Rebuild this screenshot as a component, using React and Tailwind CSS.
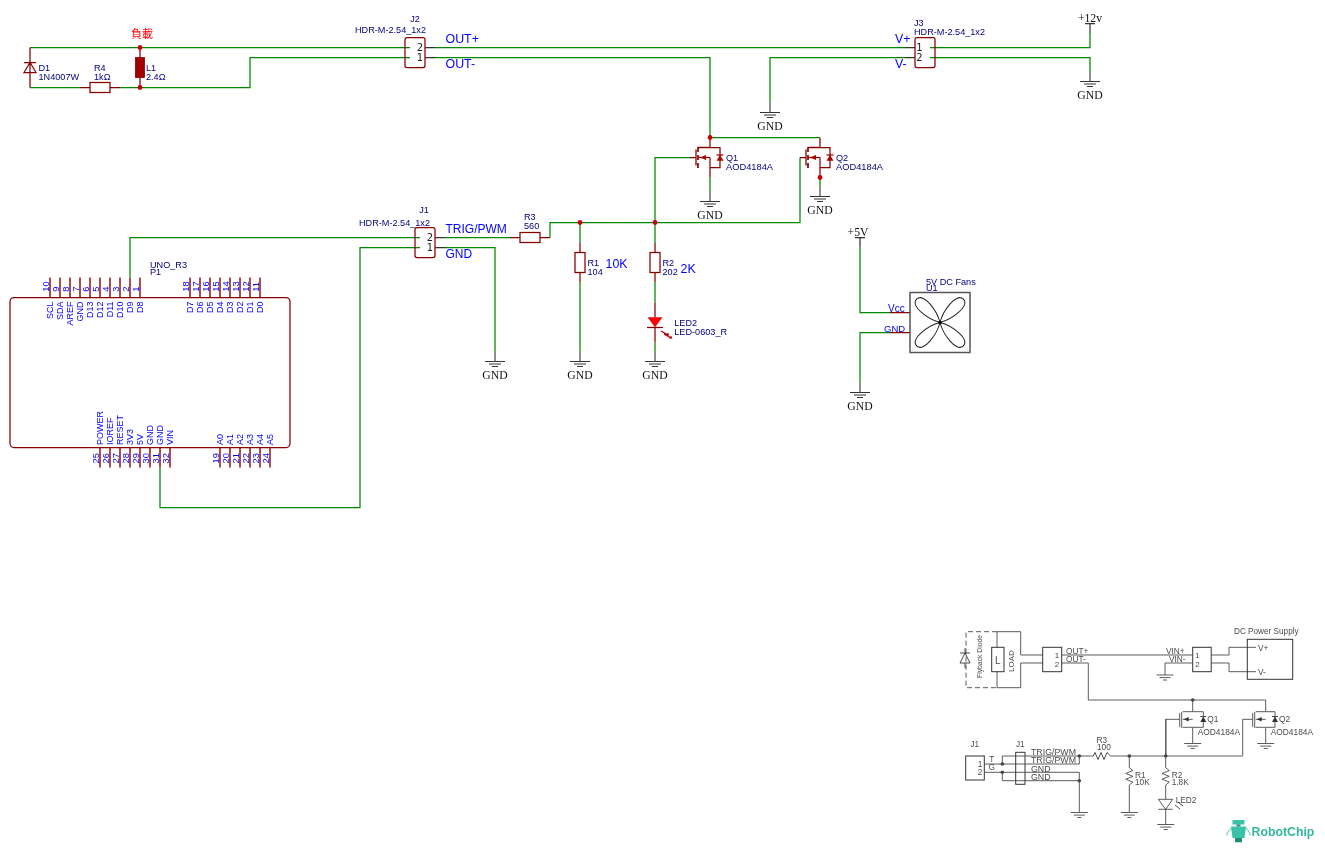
import React from "react";

const GREEN = "#008800";
const RED = "#880000";
const PIN = "#333333";
const NAVY = "#000080";
const BLUE = "#0000ff";
const GREY = "#4a4a4a";

function T({ x, y, c = NAVY, s = 9.15, a = "start", rot, cls = "", children }) {
  return (
    <text
      x={x}
      y={y}
      fill={c}
      fontSize={s}
      textAnchor={a}
      className={cls}
      transform={rot ? `rotate(-90 ${x} ${y})` : undefined}
    >
      {children}
    </text>
  );
}

const P = ({ d, c = RED, w = 1.25, f = "none", dash }) => (
  <path d={d} stroke={c} strokeWidth={w} fill={f} strokeDasharray={dash} />
);

const Dot = ({ x, y, c = "#cc0000", r = 2.4 }) => <circle cx={x} cy={y} r={r} fill={c} />;

function Gnd({ x, y }) {
  return (
    <g>
      <P d={`M${x} ${y - 10}V${y}M${x - 10} ${y}H${x + 10}M${x - 6} ${y + 2.5}H${x + 6}M${x - 3} ${y + 5}H${x + 3}`} c={PIN} w={1.1} />
      <T x={x} y={y + 17} c="#111111" s={11.7} a="middle" cls="font-['Liberation_Serif',serif]">GND</T>
    </g>
  );
}

function Hdr({ x, y, w = 20, nums, nx }) {
  return (
    <g>
      <rect x={x} y={y} width={w} height={30} rx={2} stroke={RED} fill="none" />
      <T x={nx} y={y + 13.5} c="#222222" s={10} a="middle" cls="font-['DejaVu_Sans',sans-serif]">{nums[0]}</T>
      <T x={nx} y={y + 23.5} c="#222222" s={10} a="middle" cls="font-['DejaVu_Sans',sans-serif]">{nums[1]}</T>
    </g>
  );
}

function Fet({ x, name }) {
  const y = 157.5;
  return (
    <g>
      <P d={`M${x} 138V${y - 10}H${x + 10}V${y + 10}H${x}M${x} ${y + 10}V177M${x} ${y}V${y + 10}M${x - 20} ${y}H${x - 14}`} />
      <P d={`M${x - 14} ${y - 8}V${y + 8}`} w={1.3} />
      <P d={`M${x - 12} ${y - 10.5}V${y - 5.5}M${x - 12} ${y - 2.5}V${y + 2.5}M${x - 12} ${y + 5.5}V${y + 10.5}M${x - 12} ${y - 10}H${x}`} w={1.7} />
      <P d={`M${x - 11} ${y}H${x}`} />
      <path d={`M${x - 10} ${y}L${x - 4} ${y - 2.6}V${y + 2.6}Z`} fill="#aa0000" />
      <path d={`M${x + 10} ${y - 2.5}L${x + 13.5} ${y + 3.2}H${x + 6.5}Z`} fill="#aa0000" />
      <P d={`M${x + 6.5} ${y - 2.5}H${x + 13.5}`} c="#aa0000" />
      <T x={x + 16} y={y + 3.6}>{name}</T>
      <T x={x + 16} y={y + 12.3} s={9.3}>AOD4184A</T>
    </g>
  );
}

const topA = [["10", "SCL"], ["9", "SDA"], ["8", "AREF"], ["7", "GND"], ["6", "D13"], ["5", "D12"], ["4", "D11"], ["3", "D10"], ["2", "D9"], ["1", "D8"]];
const topB = [["18", "D7"], ["17", "D6"], ["16", "D5"], ["15", "D4"], ["14", "D3"], ["13", "D2"], ["12", "D1"], ["11", "D0"]];
const botA = [["25", "POWER"], ["26", "IOREF"], ["27", "RESET"], ["28", "3V3"], ["29", "5V"], ["30", "GND"], ["31", "GND"], ["32", "VIN"]];
const botB = [["19", "A0"], ["20", "A1"], ["21", "A2"], ["22", "A3"], ["23", "A4"], ["24", "A5"]];

function TopPins({ list, x0 }) {
  return list.map(([n, l], i) => {
    const x = x0 + i * 10;
    return (
      <g key={n}>
        <P d={`M${x} 277.5V297.5`} w={1.4} />
        <T x={x - 0.9} y={291.8} c={BLUE} s={9.4} rot>{n}</T>
        <T x={x + 2.8} y={301.5} c={BLUE} s={9} a="end" rot>{l}</T>
      </g>
    );
  });
}

function BotPins({ list, x0 }) {
  return list.map(([n, l], i) => {
    const x = x0 + i * 10;
    return (
      <g key={n}>
        <P d={`M${x} 447.5V467.5`} w={1.4} />
        <T x={x - 1.2} y={463.5} c={BLUE} s={9.4} rot>{n}</T>
        <T x={x + 3.3} y={445} c={BLUE} s={9} rot>{l}</T>
      </g>
    );
  });
}

function SmallGnd({ x, y }) {
  return <P d={`M${x - 8.5} ${y}H${x + 8.5}M${x - 5.5} ${y + 2.6}H${x + 5.5}M${x - 2} ${y + 5}H${x + 2}`} c={GREY} w={0.9} />;
}

function Zig({ x, y }) {
  const pts = [];
  const n = 6;
  for (let i = 0; i <= n; i++) {
    const yy = y + (i * 17.3) / n;
    pts.push(`${i === 0 || i === n ? x : x + (i % 2 ? 3.6 : -3.6)} ${yy}`);
  }
  return <P d={`M${pts.join("L")}`} c={GREY} w={0.9} />;
}

function SFet({ x, gx, rx, label, tx }) {
  return (
    <g>
      <P d={`M${x} 700V711.7H${rx}V727.3H${x}M${x} 711.7H${x - 10}M${x} 727.3H${x - 10}M${x} 727.3V743`} c={GREY} w={0.9} />
      <P d={`M${x - 11} 712V728M${x - 13} 713V727M${x - 13} 719.3H${gx}M${gx} 719.3V755.7M${x - 10} 719.3H${x}`} c={GREY} w={0.9} />
      <path d={`M${x - 9} 719.3L${x - 4} 717V721.6Z`} fill="#333" />
      <path d={`M${rx} 716.5L${rx + 3} 722H${rx - 3}Z`} fill="#333" />
      <P d={`M${rx - 3} 716.5H${rx + 3}`} c="#333" w={0.9} />
      <SmallGnd x={x} y={743.5} />
      <T x={rx + 4} y={722} c={GREY} s={8.4}>{label}</T>
      <T x={tx} y={735.3} c={GREY} s={8.4}>AOD4184A</T>
    </g>
  );
}

export default function App() {
  return (
    <div className="w-[1325px] h-[853px] bg-white overflow-hidden">
      <svg width="1325" height="853" viewBox="0 0 1325 853" className="block font-['Liberation_Sans',sans-serif]">
        <g className="blur-[0.25px]" strokeWidth={1.25}>
          {/* wires */}
          <P
            c={GREEN}
            d="M30 47.5H410M435 47.5H905M930 47.5H1090V33M30 87.5H80M120 87.5H250V57.5H410M435 57.5H710V137.5H820M770 102.5V57.5H905M930 57.5H1090V71.5M690 157.5H655V243M550 237.5V222.5H800V157.5M445 237.5H510M445 247.5H495V351.5M420 237.5H130V277.5M420 247.5H360V507.5H160V467.5M580 222.5V243M580 282V351.5M655 282V302.5M655 342.5V351.5M710 177V191.5M820 177V186.5M860 247V312.5H890M890 332.5H860V382.5"
          />

          {/* D1, R4, L1 */}
          <P d="M30 47.5V87.5M24 62.5H36M30 62.5L24 72.5H36Z" />
          <P d="M80 87.5H90M110 87.5H120M140 47.5V57.5M140 77.5V87.5" />
          <rect x={90} y={82.5} width={20} height={10} stroke={RED} fill="none" />
          <rect x={135.5} y={57.5} width={9} height={20} fill="#a00000" stroke={RED} strokeWidth={0.8} />
          <Dot x={140} y={47.5} />
          <Dot x={140} y={87.5} />
          <T x={131} y={37.5} c="#ff0000" s={11} cls="font-['Noto_Sans_CJK_TC',sans-serif]">負載</T>
          <T x={38.5} y={71}>D1</T>
          <T x={38.5} y={79.8}>1N4007W</T>
          <T x={94} y={70.8}>R4</T>
          <T x={94} y={79.5}>1kΩ</T>
          <T x={146} y={71}>L1</T>
          <T x={146} y={79.8}>2.4Ω</T>

          {/* J2 */}
          <Hdr x={405} y={37.5} nums={["2", "1"]} nx={420} />
          <P c={PIN} d="M425 47.5H435M425 57.5H435" />
          <T x={415} y={22} a="middle">J2</T>
          <T x={355} y={32.8}>HDR-M-2.54_1x2</T>
          <T x={445.5} y={42.8} c={BLUE} s={12.4}>OUT+</T>
          <T x={445.5} y={67.5} c={BLUE} s={12.4}>OUT-</T>

          {/* J3 */}
          <Hdr x={915} y={37.5} nums={["1", "2"]} nx={919.5} />
          <P c={PIN} d="M905 47.5H915M905 57.5H915" />
          <T x={914} y={25.8}>J3</T>
          <T x={914} y={35}>HDR-M-2.54_1x2</T>
          <T x={895} y={42.8} c={BLUE} s={12.4}>V+</T>
          <T x={895} y={67.5} c={BLUE} s={12.4}>V-</T>

          {/* +12v */}
          <P c={PIN} d="M1085 23.5H1095M1090 23.5V33" />
          <T x={1090} y={21.5} c="#111111" s={11.7} a="middle" cls="font-['Liberation_Serif',serif]">+12v</T>

          <Gnd x={770} y={112.5} />
          <Gnd x={1090} y={81.5} />
          <Gnd x={710} y={201.5} />
          <Gnd x={820} y={196.5} />
          <Gnd x={495} y={361.5} />
          <Gnd x={580} y={361.5} />
          <Gnd x={655} y={361.5} />
          <Gnd x={860} y={392.5} />

          {/* MOSFETs */}
          <Fet x={710} name="Q1" />
          <Fet x={820} name="Q2" />
          <Dot x={710} y={137.5} />
          <Dot x={820} y={177.5} />
          <Dot x={655} y={222.5} />
          <Dot x={580} y={222.5} />

          {/* J1 */}
          <Hdr x={415} y={227.5} nums={["2", "1"]} nx={430} />
          <P c={PIN} d="M435 237.5H445M435 247.5H445" />
          <T x={424} y={212.5} a="middle">J1</T>
          <T x={359} y={225.8}>HDR-M-2.54_1x2</T>
          <T x={445.5} y={232.8} c={BLUE} s={12}>TRIG/PWM</T>
          <T x={445.5} y={257.5} c={BLUE} s={12}>GND</T>

          {/* R3 R1 R2 LED */}
          <P d="M510 237.5H520M540 237.5H550M580 243V252.5M580 272.5V282M655 243V252.5M655 272.5V282M655 302.5V317M655 327V342.5" />
          <rect x={520} y={232.5} width={20} height={10} stroke={RED} fill="none" />
          <rect x={575} y={252.5} width={10} height={20} stroke={RED} fill="none" />
          <rect x={650} y={252.5} width={10} height={20} stroke={RED} fill="none" />
          <path d="M648 317.5H662L655 327Z" fill="#ff0000" stroke="#cc0000" strokeWidth={0.5} />
          <P d="M647 327.5H663" />
          <P d="M661 331L668 335M664 334L671 338" c="#aa0000" />
          <path d="M669.5 335.5L666 335.5L668 332.5ZM672.5 338.5L669 338.5L671 335.5Z" fill="#aa0000" />
          <T x={524} y={220}>R3</T>
          <T x={524} y={229.3}>560</T>
          <T x={587.5} y={265.8}>R1</T>
          <T x={587.5} y={275}>104</T>
          <T x={605.5} y={267.8} c={BLUE} s={12.4}>10K</T>
          <T x={662.5} y={265.8}>R2</T>
          <T x={662.5} y={275}>202</T>
          <T x={680.5} y={272.8} c={BLUE} s={12.4}>2K</T>
          <T x={674.3} y={325.8}>LED2</T>
          <T x={674.3} y={335}>LED-0603_R</T>

          {/* Arduino */}
          <rect x={10} y={297.5} width={280} height={150} rx={4} stroke={RED} fill="none" />
          <T x={150} y={267.5}>UNO_R3</T>
          <T x={150} y={274.5}>P1</T>
          <TopPins list={topA} x0={50} />
          <TopPins list={topB} x0={190} />
          <BotPins list={botA} x0={100} />
          <BotPins list={botB} x0={220} />

          {/* Fan */}
          <P c={PIN} d="M855 237.5H865M860 237.5V247" />
          <T x={858} y={236} c="#111111" s={11.7} a="middle" cls="font-['Liberation_Serif',serif]">+5V</T>
          <P d="M890 312.5H910M890 332.5H910" />
          <rect x={910} y={292.5} width={60} height={60} stroke="#555555" strokeWidth={1.5} fill="none" />
          <g transform="translate(940 322.5)">
            {[45, 135, 225, 315].map((r) => (
              <path key={r} d="M0 0C10 -6 33 -10 33 0C33 10 10 6 0 0Z" transform={`rotate(${r})`} stroke="#222222" strokeWidth={1} fill="none" />
            ))}
            <circle r={1.7} fill="#000000" />
          </g>
          <T x={926} y={284.5}>5V DC Fans</T>
          <T x={926} y={291.3}>U1</T>
          <T x={888} y={311.8} c={BLUE} s={10}>Vcc</T>
          <T x={884} y={331.8} c={BLUE} s={9.5}>GND</T>
        </g>

        {/* Embedded reference picture */}
        <g className="blur-[0.45px]">
          <P c={GREY} w={0.9} dash="5 3" d="M997 631.7H966V687.7H997" />
          <P c={GREY} w={0.9} d="M997 631.7H1020.7V655H1042.7M997 687.7H1020.7V663H1042.7M997 631.7V647.3M997 671.7V687.7" />
          <P c="#333" w={0.9} d="M965 648V653M965 663V668M960 653H970M965 653L960 663H970Z" />
          <rect x={991.7} y={647.3} width={12.3} height={24.4} stroke="#333" fill="none" />
          <T x={997.8} y={664} c={GREY} s={10} a="middle">L</T>
          <T x={1014} y={672} c={GREY} s={8} rot>LOAD</T>
          <T x={982} y={678} c={GREY} s={6.8} rot>Flyback Diode</T>

          <rect x={1042.7} y={647.3} width={19} height={24.4} stroke="#333" fill="none" />
          <T x={1057} y={658} c={GREY} s={8} a="middle">1</T>
          <T x={1057} y={667} c={GREY} s={8} a="middle">2</T>
          <rect x={1192.7} y={647.3} width={18.5} height={24.4} stroke="#333" fill="none" />
          <T x={1197.5} y={658} c={GREY} s={8} a="middle">1</T>
          <T x={1197.5} y={667} c={GREY} s={8} a="middle">2</T>
          <P c={GREY} w={0.9} d="M1061.7 655H1192.7M1061.7 663H1088.3V700H1265.7M1165 663H1192.7M1165 663V675M1211 655H1229V647.3H1256M1211 663H1229V671.7H1256" />
          <SmallGnd x={1165} y={675} />
          <rect x={1247.3} y={639.3} width={45.4} height={40} stroke="#333" fill="none" />
          <T x={1066} y={654.3} c={GREY} s={8.3}>OUT+</T>
          <T x={1066} y={662.3} c={GREY} s={8.3}>OUT-</T>
          <T x={1166} y={654.3} c={GREY} s={8.3}>VIN+</T>
          <T x={1169} y={662.3} c={GREY} s={8.3}>VIN-</T>
          <T x={1258} y={650.5} c={GREY} s={8.3}>V+</T>
          <T x={1258} y={674.8} c={GREY} s={8.3}>V-</T>
          <T x={1234} y={634.3} c={GREY} s={8.2}>DC Power Supply</T>

          <SFet x={1192.7} gx={1166} rx={1203.3} label="Q1" tx={1197.7} />
          <SFet x={1265.7} gx={1242.7} rx={1275} label="Q2" tx={1270.7} />
          <Dot x={1192.7} y={700} c="#444" r={1.8} />

          <T x={970.5} y={746.8} c={GREY} s={8.2}>J1</T>
          <T x={1016} y={746.8} c={GREY} s={8.2}>J1</T>
          <rect x={965.7} y={756} width={18.6} height={24} stroke="#333" fill="none" />
          <T x={980} y={767} c={GREY} s={8.3} a="middle">1</T>
          <T x={980} y={775} c={GREY} s={8.3} a="middle">2</T>
          <rect x={1015.7} y={752.3} width={9.3} height={32} stroke="#333" fill="none" />
          <P c={GREY} w={0.9} d="M1002.3 756H1079.3V764H984M984 772.3H1079.3V812M1002.3 780.7H1079.3M1002.3 756V764M1002.3 772.3V780.7M1079.3 756H1093.3M1110.7 756H1242.7M1129.3 756V767.7M1129.3 785V812.3M1165.7 719V767.7M1165.7 785V799.3M1165.7 809.3V824.3M1158.3 809.3H1172.7M1165.7 809.3L1158.3 799.3H1172.7Z" />
          <P c="#333" w={0.9} d="M1093.3 756L1095 752.5L1098 759.5L1101 752.5L1104 759.5L1107 752.5L1110.7 756" />
          <Zig x={1129.3} y={767.7} />
          <Zig x={1165.7} y={767.7} />
          <P c="#333" w={0.9} d="M1175 805L1180 809M1178 802L1183 806" />
          <SmallGnd x={1079.3} y={812.5} />
          <SmallGnd x={1129.3} y={812.5} />
          <SmallGnd x={1165.7} y={824.5} />
          <Dot x={1002.3} y={764} c="#444" r={1.8} />
          <Dot x={1002.3} y={772.3} c="#444" r={1.8} />
          <Dot x={1079.3} y={756} c="#444" r={1.8} />
          <Dot x={1079.3} y={780.7} c="#444" r={1.8} />
          <Dot x={1129.3} y={756} c="#444" r={1.8} />
          <Dot x={1165.7} y={756} c="#444" r={1.8} />
          <T x={991.7} y={762} c={GREY} s={8.2} a="middle">T</T>
          <T x={991.7} y={770} c={GREY} s={8.2} a="middle">G</T>
          <T x={1031} y={755} c={GREY} s={8.8}>TRIG/PWM</T>
          <T x={1031} y={763.3} c={GREY} s={8.8}>TRIG/PWM</T>
          <T x={1031} y={771.5} c={GREY} s={8.8}>GND</T>
          <T x={1031} y={779.7} c={GREY} s={8.8}>GND</T>
          <T x={1096.5} y={742.5} c={GREY} s={8.3}>R3</T>
          <T x={1097} y={750.2} c={GREY} s={8.3}>100</T>
          <T x={1135} y={777.8} c={GREY} s={8.3}>R1</T>
          <T x={1135} y={785.3} c={GREY} s={8.3}>10K</T>
          <T x={1171.7} y={777.8} c={GREY} s={8.3}>R2</T>
          <T x={1171.7} y={785.3} c={GREY} s={8.3}>1.8K</T>
          <T x={1175.7} y={802.8} c={GREY} s={8.3}>LED2</T>

          {/* logo */}
          <rect x={1232.5} y={820} width={12} height={4.5} rx={0.6} fill="#38c2a6" />
          <rect x={1236.5} y={824.5} width={4} height={2} fill="#1f8c7a" />
          <path d="M1231 826.5H1246L1244.5 838H1232.5Z" fill="#38c2a6" />
          <rect x={1235} y={838} width={7} height={4.2} rx={0.6} fill="#1f8c7a" />
          <P c="#38c2a6" w={0.9} d="M1231 828L1227 833.5V835.5M1246 828L1250 833.5V835.5" />
          <T x={1251.5} y={835.6} c="#33b8a0" s={12.3} cls="font-bold">RobotChip</T>
        </g>
      </svg>
    </div>
  );
}
